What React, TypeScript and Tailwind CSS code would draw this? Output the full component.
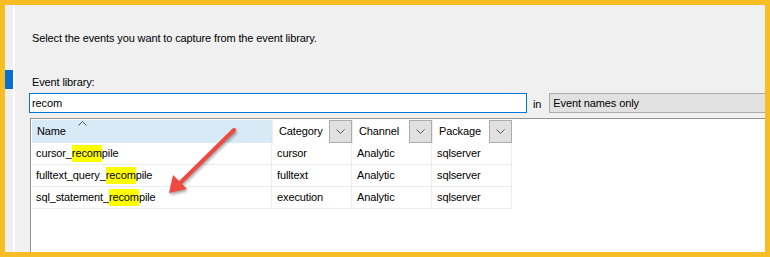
import React from 'react';

const rows = [
  { pre: 'cursor_', post: 'pile', category: 'cursor' },
  { pre: 'fulltext_query_', post: 'pile', category: 'fulltext' },
  { pre: 'sql_statement_', post: 'pile', category: 'execution' },
];

const Chevron: React.FC<{ up?: boolean }> = ({ up }) => (
  <svg width="9" height="5" viewBox="0 0 9 5" fill="none" stroke="#555" strokeWidth={1}>
    {up ? <path d="M0.5 4.5 L4.5 0.5 L8.5 4.5" /> : <path d="M0.5 0.5 L4.5 4.5 L8.5 0.5" />}
  </svg>
);

const FilterButton: React.FC = () => (
  <div className="w-[23px] h-[23px] bg-[#e1e1e1] border border-[#adadad] flex items-center justify-center">
    <Chevron />
  </div>
);

const App: React.FC = () => {
  return (
    <div
      className="relative w-[770px] h-[257px] bg-[#f6be24] p-[5px] overflow-hidden text-[11px] tracking-[-0.12px] text-black"
      style={{ fontFamily: '"Liberation Sans", Arial, sans-serif' }}
    >
      <div className="flex h-full bg-[#f0f0f0]">
        {/* left navigation strip */}
        <div className="w-[8px] bg-[#f0f0f0] flex flex-col">
          <div className="h-[65px]" />
          <div className="h-[19px] bg-[#0a6fd0]" />
        </div>
        <div className="w-[2px] bg-white" />

        <div className="flex-1 flex flex-col min-w-0">
          <div className="pl-[17px] pt-[26px] leading-[15px]">
            Select the events you want to capture from the event library.
          </div>
          <div className="pl-[17px] mt-[29px] leading-[15px]">Event library:</div>

          <div className="flex items-center mt-[3px] ml-[14px]">
            <div className="w-[498px] h-[20px] border border-[#0078d7] bg-white flex items-center pl-[2px]">
              recom
            </div>
            <span className="ml-[6px] mr-[8px] mt-[3px]">in</span>
            <div className="flex-1 h-[20px] bg-[#e1e1e1] border border-r-0 border-[#adadad] flex items-center pl-[3px]">
              Event names only
            </div>
          </div>

          {/* event list */}
          <div className="flex-1 mt-[5px] ml-[15px] border-l border-t border-[#8f9399] bg-white pl-[1px] pt-[1px]">
            <div className="flex h-[23px] w-[480px]">
              <div className="relative w-[240px] bg-[#d9eaf7] flex items-center pl-[5px]">
                Name
                <div className="absolute left-[46px] top-[1px]">
                  <Chevron up />
                </div>
              </div>
              {['Category', 'Channel', 'Package'].map((h) => (
                <div key={h} className="w-[80px] flex items-center justify-between pl-[6px] border-l border-[#ececec]">
                  <span>{h}</span>
                  <FilterButton />
                </div>
              ))}
            </div>
            {rows.map((r) => (
              <div key={r.pre} className="flex h-[22px] w-[480px] border-b border-[#ececec]">
                <div className="w-[240px] flex items-center pl-[4px] border-r border-[#ececec]">
                  <span>{r.pre}</span>
                  <span className="bg-[#ffff00]">recom</span>
                  <span>{r.post}</span>
                </div>
                <div className="w-[80px] flex items-center pl-[5px] border-r border-[#ececec]">{r.category}</div>
                <div className="w-[80px] flex items-center pl-[5px] border-r border-[#ececec]">Analytic</div>
                <div className="w-[80px] flex items-center pl-[5px] border-r border-[#ececec]">sqlserver</div>
              </div>
            ))}
          </div>
        </div>
      </div>

      {/* annotation arrow */}
      <svg
        className="absolute left-0 top-0 pointer-events-none"
        width="770"
        height="257"
        style={{ filter: 'drop-shadow(1px 2px 1.5px rgba(0,0,0,0.35))' }}
      >
        <line x1="234" y1="130" x2="180" y2="183" stroke="#ee4a42" strokeWidth={4} strokeLinecap="round" />
        <polygon points="169,193 173,175 187,189" fill="#ee4a42" />
      </svg>
    </div>
  );
};

export default App;
